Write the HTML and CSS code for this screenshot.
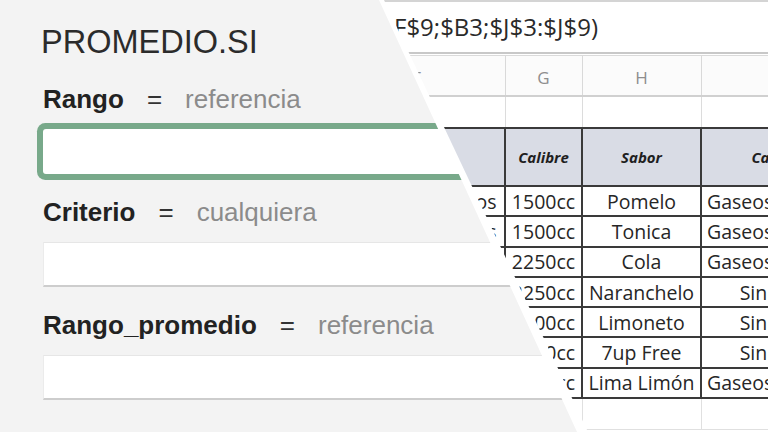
FILE: index.html
```html
<!DOCTYPE html>
<html lang="es">
<head>
<meta charset="utf-8">
<title>PROMEDIO.SI</title>
<link rel="stylesheet" href="styles.css">
</head>
<body>
<div class="dialog">
  <h1 class="title">PROMEDIO.SI</h1>
  <div class="group">
    <div class="label"><b class="name">Rango</b><span class="eq">=</span><span class="hint">referencia</span></div>
    <div class="field focused"></div>
  </div>
  <div class="group">
    <div class="label"><b class="name">Criterio</b><span class="eq">=</span><span class="hint">cualquiera</span></div>
    <div class="field"></div>
  </div>
  <div class="group">
    <div class="label"><b class="name">Rango_promedio</b><span class="eq">=</span><span class="hint">referencia</span></div>
    <div class="field"></div>
  </div>
</div>

<div class="sheet-wrap">
  <div class="sheet">
    <div class="fbar"><div class="fbox"><span class="ftext">=PROMEDIO.SI($F$3:$F$9;$B3;$J$3:$J$9)</span></div></div>
    <div class="fsep"></div>
    <table class="grid">
      <colgroup><col class="cf"><col class="cg"><col class="ch"><col class="ci"></colgroup>
      <tr class="colhead"><td>F</td><td>G</td><td>H</td><td>I</td></tr>
      <tr class="blank"><td></td><td></td><td></td><td></td></tr>
      <tr class="thead"><td>Marca</td><td>Calibre</td><td>Sabor</td><td>Categoría</td></tr>
      <tr class="row"><td>Paso de los Toros</td><td>1500cc</td><td>Pomelo</td><td class="lt">Gaseosa</td></tr>
      <tr class="row"><td>Paso de los Toros</td><td>1500cc</td><td>Tonica</td><td class="lt">Gaseosa</td></tr>
      <tr class="row"><td>Coca Cola</td><td>2250cc</td><td>Cola</td><td class="lt">Gaseosa</td></tr>
      <tr class="row"><td>Conaprole</td><td>2250cc</td><td>Naranchelo</td><td>Sin azúcar</td></tr>
      <tr class="row"><td>Salus</td><td>1500cc</td><td>Limoneto</td><td>Sin azúcar</td></tr>
      <tr class="row"><td>Pepsico</td><td>1500cc</td><td>7up Free</td><td>Sin azúcar</td></tr>
      <tr class="row"><td>Sprite</td><td>1500cc</td><td>Lima Limón</td><td class="lt">Gaseosa</td></tr>
      <tr class="tail"><td></td><td></td><td></td><td></td></tr>
    </table>
  </div>
</div>
</body>
</html>
```

FILE: styles.css
```css
html, body {
  margin: 0;
  padding: 0;
}
body {
  width: 768px;
  height: 432px;
  overflow: hidden;
  position: relative;
  background: #f3f3f3;
  font-family: "Liberation Sans", Arial, sans-serif;
}

/* ---------- function dialog ---------- */
.dialog {
  padding: 22px 0 0 43px;
}
.title {
  margin: 0 0 22px -2px;
  font-size: 32.5px;
  line-height: 40px;
  font-weight: normal;
  color: #2b2b2b;
}
.group + .group {
  margin-top: 23px;
}
.label {
  display: flex;
  white-space: nowrap;
  font-size: 26px;
  line-height: 30px;
}
.name {
  font-weight: bold;
  color: #222;
}
.eq {
  margin: 0 23px;
  color: #333;
}
.hint {
  color: #8b8b8b;
}
.field {
  margin-top: 15px;
  height: 45px;
  box-sizing: border-box;
  background: #fff;
  border-top: 1px solid #e6e6e6;
  border-left: 1px solid #ebebeb;
  border-bottom: 2px solid #cdcdcd;
}
.field.focused {
  border: none;
  border-radius: 3px;
  box-shadow: 0 0 0 6px #78a98a;
}

/* ---------- spreadsheet overlay ---------- */
.sheet-wrap {
  position: absolute;
  top: 0;
  left: 0;
  width: 768px;
  height: 432px;
  background: #fff;
  clip-path: polygon(379px 0, 100% 0, 100% 100%, 577px 100%);
}
.sheet {
  height: 100%;
  clip-path: polygon(384px 0, 100% 0, 100% 100%, 588px 100%);
  font-family: "Open Sans", "Liberation Sans", sans-serif;
  color: #2a2a2a;
}
.fbar {
  height: 50px;
  border-top: 2px solid #d4d4d4;
  display: flex;
}
.fbox {
  flex: none;
  width: 598px;
  display: flex;
  justify-content: flex-end;
  font-size: 24px;
  line-height: 50px;
  white-space: nowrap;
  color: #2a2a2a;
}
.ftext {
  flex: none;
}
.fsep {
  height: 1px;
  border-top: 2px solid #c8c8c8;
  border-bottom: 1px solid #dadada;
}
.grid {
  margin-left: 328px;
  border-collapse: collapse;
  table-layout: fixed;
  width: 542px;
}
.cf { width: 176px; }
.cg { width: 77px; }
.ch { width: 119px; }
.ci { width: 170px; }
.grid td {
  padding: 0;
  text-align: center;
  white-space: nowrap;
  overflow: hidden;
}
.colhead td {
  height: 40px;
  font-size: 17px;
  color: #8e8e8e;
  background: #fbfbfb;
  border-right: 1px solid #d9d9d9;
  border-bottom: 2px solid #d0d0d0;
  padding-top: 4px;
  box-sizing: border-box;
}
.blank td {
  height: 30px;
  border-right: 1px solid #dcdcdc;
}
.thead td {
  height: 56px;
  background: #d9dce5;
  border: 2px solid #3a3a3a;
  font-size: 15px;
  font-weight: bold;
  font-style: italic;
  color: #1f1f1f;
}
.row td {
  height: 28.3px;
  border: 2px solid #3a3a3a;
  font-size: 19.5px;
  color: #262626;
}
.row td.lt {
  text-align: left;
  padding-left: 5px;
}
.tail td {
  height: 30px;
  border-right: 1px solid #e0e0e0;
  border-bottom: 1px solid #e0e0e0;
}
```
